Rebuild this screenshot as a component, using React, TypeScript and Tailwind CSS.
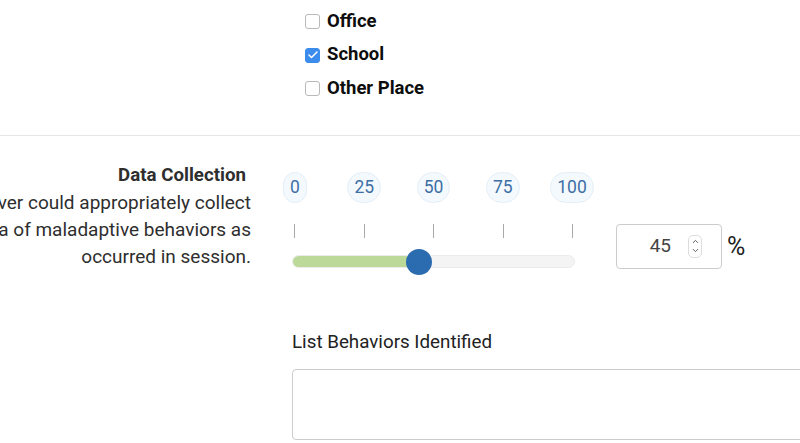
import { Check, ChevronUp, ChevronDown } from "lucide-react";

type Place = { label: string; checked: boolean };

const places: Place[] = [
  { label: "Office", checked: false },
  { label: "School", checked: true },
  { label: "Other Place", checked: false },
];

const marks = [0, 25, 50, 75, 100];

const description = [
  "Caregiver could appropriately collect",
  "data of maladaptive behaviors as",
  "occurred in session.",
];

const PlaceOption = ({ label, checked }: Place) => (
  <label className="flex h-[33.5px] items-center gap-[7px]">
    <span
      className={`flex h-[15px] w-[15px] items-center justify-center rounded-[3px] border ${
        checked ? "border-[#3b8ced] bg-[#3b8ced]" : "border-[#b9b9b9] bg-white"
      }`}
    >
      {checked && <Check className="h-[12px] w-[12px] text-white" strokeWidth={3} />}
    </span>
    <span className="text-[18.5px] font-bold text-[#0d0d0d]">{label}</span>
  </label>
);

const PercentSlider = ({ value }: { value: number }) => (
  <div className="mt-[36px] w-[283px]">
    {/* value bubbles */}
    <div className="flex justify-between px-[3px]">
      {marks.map((m) => (
        <div key={m} className="flex w-0 justify-center">
          <span className="flex h-[31px] shrink-0 items-center rounded-full border border-[#e4eff8] bg-[#f4f9fd] px-[6px] text-[17.5px] text-[#3d6fa6]">
            {m}
          </span>
        </div>
      ))}
    </div>
    {/* ticks */}
    <div className="mt-[21px] flex justify-between px-[2px]">
      {marks.map((m) => (
        <span key={m} className="h-[14px] w-px bg-[#a9a9a9]" />
      ))}
    </div>
    {/* track */}
    <div className="relative mt-[17px] h-[13px] rounded-full border border-[#ebebeb] bg-[#f4f4f4]">
      <div
        className="h-full rounded-full bg-[#bcd99a]"
        style={{ width: `${value}%` }}
      />
      <span
        className="absolute top-1/2 h-[26px] w-[26px] -translate-x-1/2 -translate-y-1/2 rounded-full bg-[#2b6cb1]"
        style={{ left: `${value}%` }}
      />
    </div>
  </div>
);

export default function App() {
  const value = 45;

  return (
    <div className="h-[443px] w-[800px] overflow-hidden bg-white font-['Roboto',sans-serif]">
      <div className="flex h-[135px] flex-col pl-[305px] pt-[5px]">
        {places.map((p) => (
          <PlaceOption key={p.label} {...p} />
        ))}
      </div>
      <div className="h-px bg-[#e6e6e6]" />

      <div className="flex">
        <div className="mt-[26px] flex w-[251px] shrink-0 flex-col text-[19px] leading-[27px] text-[#2e2e2e]">
          <div className="flex justify-end pr-[5px]">
            <span className="whitespace-nowrap text-[18.7px] font-bold">Data Collection</span>
          </div>
          {description.map((line) => (
            <div key={line} className="flex justify-end">
              <span className="whitespace-nowrap">{line}</span>
            </div>
          ))}
        </div>

        <div className="ml-[41px]">
          <PercentSlider value={value} />
        </div>

        <div className="ml-[41px] mt-[86px] flex items-center gap-[5px]">
          <div className="flex h-[45px] w-[106px] items-center justify-end rounded-[4px] border border-[#cccccc] pr-[19px]">
            <span className="text-[19px] text-[#444]">{value}</span>
            <span className="ml-[17px] flex h-[23px] w-[14px] flex-col items-center justify-center rounded-[5px] border border-[#dddddd] text-[#555]">
              <ChevronUp className="h-[9px] w-[9px]" strokeWidth={2.5} />
              <ChevronDown className="h-[9px] w-[9px]" strokeWidth={2.5} />
            </span>
          </div>
          <span className="text-[25px] leading-none text-[#222]">%</span>
        </div>
      </div>

      <div className="mt-[60px] pl-[292px]">
        <div className="text-[18.8px] leading-[24px] text-[#222]">List Behaviors Identified</div>
        <textarea className="mt-[15px] block h-[71px] w-[540px] resize-none rounded-[4px] border border-[#cccccc] outline-none" />
      </div>
    </div>
  );
}
